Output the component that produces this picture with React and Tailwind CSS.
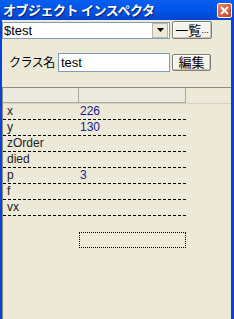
import React from "react";

const font = { fontFamily: '"Liberation Sans", "Noto Sans CJK JP", sans-serif' };

const rows = [
  ["x", "226"],
  ["y", "130"],
  ["zOrder", ""],
  ["died", ""],
  ["p", "3"],
  ["f", ""],
  ["vx", ""],
];

function XpButton({ children, className = "" }) {
  return (
    <button
      className={`flex items-center justify-center bg-[#f4f3ee] border border-[#7f7d73] rounded-[2px] shadow-[inset_-1px_-1px_0_#c9c6b8,inset_1px_1px_0_#fff] text-[13px] leading-none text-black whitespace-nowrap ${className}`}
    >
      {children}
    </button>
  );
}

export default function App() {
  return (
    <div className="w-[234px] h-[319px] overflow-hidden bg-[#0843d9] flex flex-col" style={font}>
      {/* title bar */}
      <div className="h-[20px] shrink-0 flex items-center justify-between pl-[3px] pr-[2px] bg-gradient-to-b from-[#0a5ef2] via-[#0055e5] to-[#0045cf]">
        <span className="text-white font-bold text-[13px] leading-none tracking-[-0.5px] [text-shadow:1px_1px_0_#0a1e6e]">
          オブジェクト インスペクタ
        </span>
        <div className="w-[15px] h-[15px] rounded-[2px] bg-gradient-to-br from-[#e8806a] to-[#c4401e] border border-white flex items-center justify-center">
          <svg width="9" height="9" viewBox="0 0 9 9">
            <path d="M1 1 L8 8 M8 1 L1 8" stroke="white" strokeWidth="2" />
          </svg>
        </div>
      </div>

      {/* body */}
      <div className="flex-1 ml-[2px] mr-[3px] bg-[#ece9d8] flex flex-col">
        {/* object combo */}
        <div className="flex items-center mt-[1px] h-[18px]">
          <div className="w-[168px] h-[17px] bg-white border border-[#7f9db9] flex items-center">
            <span className="flex-1 text-[13px] leading-none pl-[1px]">$test</span>
            <div className="w-[16px] h-[15px] bg-[#ece9d8] border border-[#b9b6a8] flex items-center justify-center mr-[1px]">
              <svg width="7" height="4" viewBox="0 0 7 4">
                <path d="M0 0 H7 L3.5 4 Z" fill="black" />
              </svg>
            </div>
          </div>
          <XpButton className="ml-[2px] w-[40px] h-[18px]">
            一覧<span className="text-[9px] self-end mb-[3px]">...</span>
          </XpButton>
        </div>

        {/* class name */}
        <div className="flex items-center mt-[14px] h-[19px]">
          <span className="w-[56px] pl-[7px] text-[12px] leading-none text-black whitespace-nowrap tracking-[-0.5px]">クラス名</span>
          <div className="w-[112px] h-[19px] bg-white border border-[#7f9db9] flex items-center pl-[2px] text-[13px] leading-none">
            test
          </div>
          <XpButton className="ml-[2px] w-[39px] h-[17px]">編集</XpButton>
        </div>

        {/* property grid */}
        <div className="mt-[15px] flex-1 border-t border-l border-[#8e8b7d]">
          <div className="flex h-[16px] border-b border-[#d5d2c4]">
            <div className="w-[76px] h-[15px] border-r border-b border-[#aca899] bg-[#eceade]" />
            <div className="w-[107px] h-[15px] border-r border-b border-[#aca899] bg-[#eceade]" />
          </div>
          {rows.map(([name, value]) => (
            <div key={name} className="flex w-[183px] h-[16px] border-b border-dashed border-black">
              <span className="w-[76px] pl-[4px] text-[12px] leading-[15px] text-[#222]">{name}</span>
              <span className="pl-[1px] text-[12px] leading-[15px] text-[#1a1a8c]">{value}</span>
            </div>
          ))}
          <div className="ml-[76px] mt-[16px] w-[107px] h-[16px] border border-dotted border-black" />
        </div>
      </div>
    </div>
  );
}
